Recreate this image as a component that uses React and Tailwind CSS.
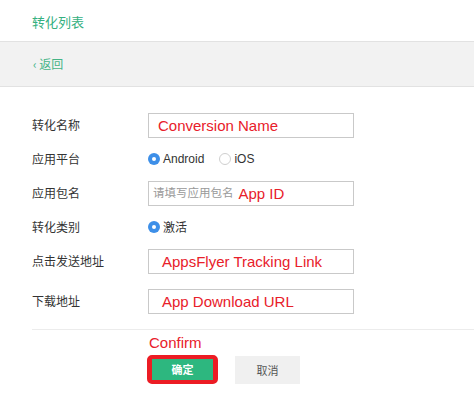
import React from 'react';

const cjk = { fontFamily: '"Noto Sans CJK SC", "Noto Sans", sans-serif' };
const latin = { fontFamily: '"Liberation Sans", Arial, "Noto Sans CJK SC", sans-serif' };

const Label = ({ children }) => (
    <div className="w-[116px] shrink-0 text-[12px] text-[#333]" style={cjk}>{children}</div>
);

const Box = ({ children, pad = 'pl-[9px]' }) => (
    <div className={`w-[206px] h-[25px] border border-[#c9c9c9] bg-white flex items-center ${pad}`}>
        {children}
    </div>
);

const RedText = ({ children }) => (
    <span className="text-[15px] leading-none text-[#e8202a]" style={latin}>{children}</span>
);

const Radio = ({ checked, label, className = '' }) => (
    <div className={`flex items-center ${className}`}>
        {checked ? (
            <span className="w-[12px] h-[12px] rounded-full bg-[#3d8fe8] flex items-center justify-center">
                <span className="w-[4px] h-[4px] rounded-full bg-white" />
            </span>
        ) : (
            <span className="w-[12px] h-[12px] rounded-full border border-[#cfcfcf] bg-white" />
        )}
        <span className="ml-[3px] text-[12px] text-[#333]" style={label.match(/[a-z]/i) ? latin : cjk}>{label}</span>
    </div>
);

const Row = ({ label, children, className = '' }) => (
    <div className={`h-[34px] flex items-center ${className}`}>
        <Label>{label}</Label>
        {children}
    </div>
);

export default function App() {
    return (
        <div className="w-[474px] h-[405px] bg-white overflow-hidden">
            <div className="h-[41px] pl-[32px] pt-[9px]">
                <span className="text-[13px] leading-[17px] text-[#35b07f]" style={cjk}>转化列表</span>
            </div>

            <div className="h-[46px] bg-[#f2f2f2] border-y border-[#e2e2e2] pl-[33px] flex items-center">
                <span className="text-[12px] text-[#45b486]" style={cjk}>‹ 返回</span>
            </div>

            <div className="pl-[32px] pt-[21px]">
                <Row label="转化名称">
                    <Box><RedText>Conversion Name</RedText></Box>
                </Row>
                <Row label="应用平台">
                    <Radio checked label="Android" />
                    <Radio label="iOS" className="ml-[15px]" />
                </Row>
                <Row label="应用包名">
                    <Box pad="pl-[4px]">
                        <span className="text-[11.5px] text-[#999]" style={cjk}>请填写应用包名</span>
                        <span className="ml-[5px]"><RedText>App ID</RedText></span>
                    </Box>
                </Row>
                <Row label="转化类别">
                    <Radio checked label="激活" />
                </Row>
                <Row label="点击发送地址">
                    <Box pad="pl-[13px]"><RedText>AppsFlyer Tracking Link</RedText></Box>
                </Row>
                <Row label="下载地址" className="mt-[6px]">
                    <Box pad="pl-[13px]"><RedText>App Download URL</RedText></Box>
                </Row>
            </div>

            <div className="ml-[32px] mt-[11px] border-t border-[#ececec]" />

            <div className="pl-[149px] pt-[4px]">
                <div className="text-[15px] leading-[17px] text-[#e8202a]" style={latin}>Confirm</div>
                <div className="flex items-start mt-[4px] -ml-[2px]">
                    <div className="border-x-[5px] border-y-[4px] border-[#ec1c24] rounded-[5px]">
                        <div className="w-[61px] h-[21px] bg-[#2db77f] flex items-center justify-center text-[11px] text-white font-bold" style={cjk}>确定</div>
                    </div>
                    <div className="ml-[17px] mt-[1px] w-[65px] h-[28px] bg-[#f0f0f0] flex items-center justify-center text-[11px] text-[#555]" style={cjk}>取消</div>
                </div>
            </div>
        </div>
    );
}
